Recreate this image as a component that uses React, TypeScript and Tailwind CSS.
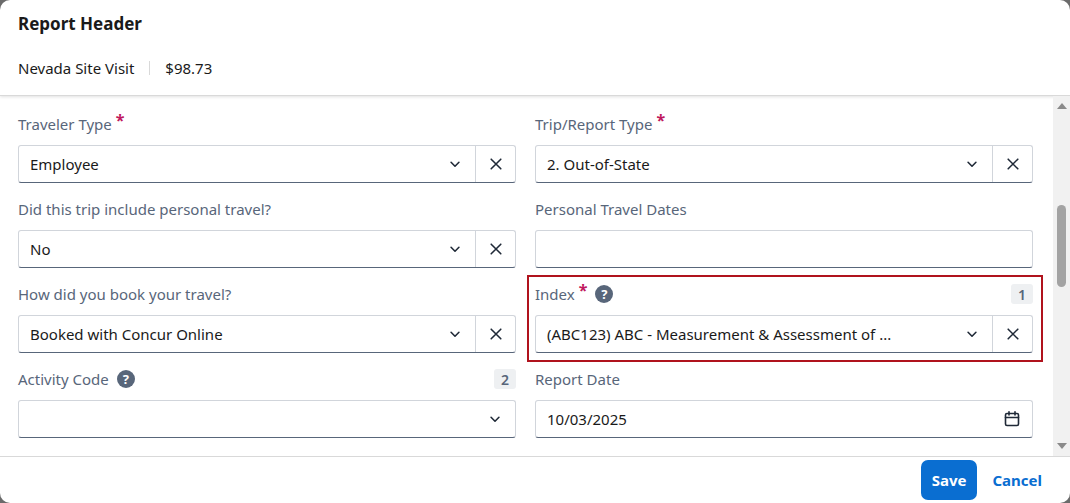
import React from "react";

const Chevron = () => (
  <svg width="14" height="14" viewBox="0 0 16 16" fill="none" stroke="#1f2937" strokeWidth="1.8" strokeLinecap="round" strokeLinejoin="round"><path d="M3.5 6l4.5 4.5L12.5 6" /></svg>
);
const XIcon = () => (
  <svg width="14" height="14" viewBox="0 0 16 16" fill="none" stroke="#1f2937" strokeWidth="1.8" strokeLinecap="round"><path d="M2.5 2.5l11 11M13.5 2.5l-11 11" /></svg>
);
const Help = () => (
  <span className="inline-flex w-[18px] h-[18px] rounded-full bg-[#58667a] text-white text-[13px] font-bold items-center justify-center ml-2 leading-none">?</span>
);
const Cal = () => (
  <svg width="18" height="18" viewBox="0 0 18 18" fill="none" stroke="#1f2937" strokeWidth="1.6"><rect x="2.5" y="3.5" width="13" height="12" rx="1.5" /><path d="M2.5 7.5h13M6 1.8v3.2M12 1.8v3.2" strokeLinecap="round" /></svg>
);

function Label({ text, req, help, badge }: { text: string; req?: boolean; help?: boolean; badge?: string }) {
  return (
    <div className="h-[20px] mb-[11px] flex items-center text-[15px] text-[#58667a]">
      <span>{text}</span>
      {req && <span className="text-[#c0185d] font-bold ml-1 -mt-2 text-[16px]">*</span>}
      {help && <Help />}
      {badge && <span className="ml-auto bg-[#eef0f2] text-[#58667a] text-[14px] font-semibold w-[22px] justify-center rounded-[3px] h-[20px] flex items-center">{badge}</span>}
    </div>
  );
}

function Select({ value, clear = true }: { value: string; clear?: boolean }) {
  return (
    <div className="flex h-[38px] border border-[#d1d5db] border-b-[#58667a] rounded-[3px] bg-white">
      <div className="flex-1 flex items-center px-[11px] text-[15px] text-[#1a1a1a] truncate">{value}</div>
      <div className="w-[40px] flex items-center justify-center"><Chevron /></div>
      {clear && <div className="w-[40px] border-l border-[#d1d5db] flex items-center justify-center"><XIcon /></div>}
    </div>
  );
}

function Text({ value, icon }: { value: string; icon?: boolean }) {
  return (
    <div className="flex h-[38px] border border-[#d1d5db] border-b-[#58667a] rounded-[3px] bg-white items-center px-[11px] text-[15px] text-[#1a1a1a]">
      <span className="flex-1">{value}</span>
      {icon && <Cal />}
    </div>
  );
}

export default function App() {
  return (
    <div className="w-[1070px] h-[503px] bg-[#6b6b6b]" style={{ fontFamily: '"Noto Sans", Arial, sans-serif' }}>
      <div className="w-full h-full bg-white rounded-[10px] flex flex-col overflow-hidden">
        <div className="h-[96px] border-b border-[#d9d9d9] shadow-[0_1px_3px_rgba(0,0,0,0.12)] px-[18px] shrink-0">
          <div className="pt-[11px] text-[17px] font-bold text-[#1a1a1a] h-[26px] leading-[26px]">Report Header</div>
          <div className="mt-[31px] flex items-center text-[15px] text-[#1a1a1a]">
            <span>Nevada Site Visit</span>
            <span className="mx-[15px] w-px h-[14px] bg-[#d9d9d9]" />
            <span>$98.73</span>
          </div>
        </div>
        <div className="flex-1 flex overflow-hidden">
          <div className="flex-1 pl-[18px] pr-[20px] pt-[18px]">
            <div className="grid grid-cols-2 gap-x-[19px]">
              <div className="pb-[16px]"><Label text="Traveler Type" req /><Select value="Employee" /></div>
              <div className="pb-[16px]"><Label text="Trip/Report Type" req /><Select value="2. Out-of-State" /></div>
              <div className="pb-[16px]"><Label text="Did this trip include personal travel?" /><Select value="No" /></div>
              <div className="pb-[16px]"><Label text="Personal Travel Dates" /><Text value="" /></div>
              <div className="pb-[16px]"><Label text="How did you book your travel?" /><Select value="Booked with Concur Online" /></div>
              <div className="pb-[16px] relative">
                <div className="absolute -left-[8px] -right-[10px] -top-[9px] bottom-[7px] border-2 border-[#b0131d] pointer-events-none" />
                <Label text="Index" req help badge="1" />
                <Select value="(ABC123) ABC - Measurement & Assessment of ..." />
              </div>
              <div className="pb-[16px]"><Label text="Activity Code" help badge="2" /><Select value="" clear={false} /></div>
              <div className="pb-[16px]"><Label text="Report Date" /><Text value="10/03/2025" icon /></div>
            </div>
          </div>
          <div className="w-[17px] bg-[#f1f1f1] flex flex-col items-center">
            <div className="h-[20px] flex items-center justify-center"><div className="w-0 h-0 border-l-[5px] border-r-[5px] border-b-[6px] border-transparent border-b-[#8a8a8a]" /></div>
            <div className="mt-[89px] w-[9px] h-[82px] rounded-full bg-[#a3a3a3]" />
            <div className="flex-1" />
            <div className="h-[20px] flex items-center justify-center"><div className="w-0 h-0 border-l-[5px] border-r-[5px] border-t-[6px] border-transparent border-t-[#8a8a8a]" /></div>
          </div>
        </div>
        <div className="h-[47px] border-t border-[#d9d9d9] flex items-center justify-end pr-[28px] gap-[15px] shrink-0">
          <button className="h-[40px] px-[11px] rounded-[7px] bg-[#0a6ed1] text-white text-[15px] font-bold">Save</button>
          <button className="text-[15px] font-bold text-[#0a6ed1]">Cancel</button>
        </div>
      </div>
    </div>
  );
}
